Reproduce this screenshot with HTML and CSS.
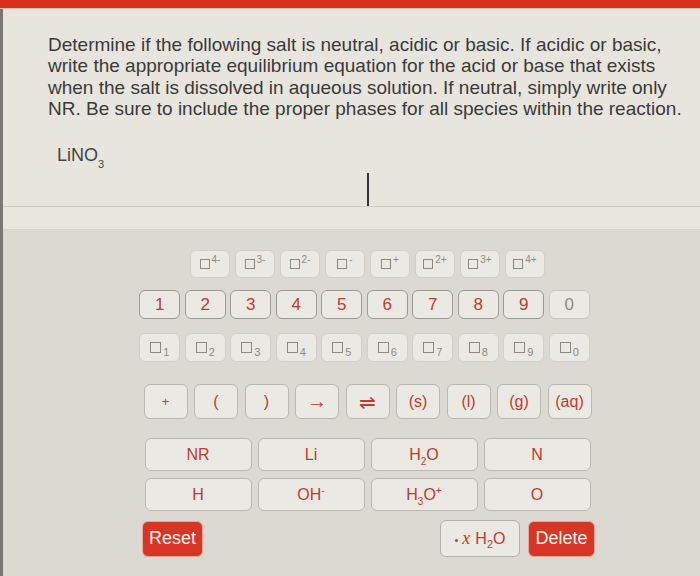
FILE: index.html
```html
<!DOCTYPE html>
<html>
<head>
<meta charset="utf-8">
<link rel="stylesheet" href="styles.css">
</head>
<body>
<div class="topbar"></div>
<div class="page">
  <div class="content">
    <p class="question">Determine if the following salt is neutral, acidic or basic. If acidic or basic,<br>write the appropriate equilibrium equation for the acid or base that exists<br>when the salt is dissolved in aqueous solution. If neutral, simply write only<br>NR. Be sure to include the proper phases for all species within the reaction.</p>
    <div class="formula">LiNO<sub>3</sub></div>
    <div class="answer"><span class="cursor"></span></div>
  </div>
  <div class="band"></div>
  <div class="keypad">
    <div class="row charges">
      <div class="key tpl"><span><span class="box"></span><sup>4-</sup></span></div>
      <div class="key tpl"><span><span class="box"></span><sup>3-</sup></span></div>
      <div class="key tpl"><span><span class="box"></span><sup>2-</sup></span></div>
      <div class="key tpl"><span><span class="box"></span><sup>-</sup></span></div>
      <div class="key tpl"><span><span class="box"></span><sup>+</sup></span></div>
      <div class="key tpl"><span><span class="box"></span><sup>2+</sup></span></div>
      <div class="key tpl"><span><span class="box"></span><sup>3+</sup></span></div>
      <div class="key tpl"><span><span class="box"></span><sup>4+</sup></span></div>
    </div>
    <div class="row digits">
      <div class="key num">1</div>
      <div class="key num">2</div>
      <div class="key num">3</div>
      <div class="key num">4</div>
      <div class="key num">5</div>
      <div class="key num">6</div>
      <div class="key num">7</div>
      <div class="key num">8</div>
      <div class="key num">9</div>
      <div class="key num zero">0</div>
    </div>
    <div class="row subs">
      <div class="key tpl"><span><span class="box"></span><sub>1</sub></span></div>
      <div class="key tpl"><span><span class="box"></span><sub>2</sub></span></div>
      <div class="key tpl"><span><span class="box"></span><sub>3</sub></span></div>
      <div class="key tpl"><span><span class="box"></span><sub>4</sub></span></div>
      <div class="key tpl"><span><span class="box"></span><sub>5</sub></span></div>
      <div class="key tpl"><span><span class="box"></span><sub>6</sub></span></div>
      <div class="key tpl"><span><span class="box"></span><sub>7</sub></span></div>
      <div class="key tpl"><span><span class="box"></span><sub>8</sub></span></div>
      <div class="key tpl"><span><span class="box"></span><sub>9</sub></span></div>
      <div class="key tpl"><span><span class="box"></span><sub>0</sub></span></div>
    </div>
    <div class="row symbols">
      <div class="key sym small">+</div>
      <div class="key sym">(</div>
      <div class="key sym">)</div>
      <div class="key sym arrow">&rarr;</div>
      <div class="key sym arrow">&#8652;</div>
      <div class="key sym">(s)</div>
      <div class="key sym">(l)</div>
      <div class="key sym">(g)</div>
      <div class="key sym">(aq)</div>
    </div>
    <div class="row elements">
      <div class="key el">NR</div>
      <div class="key el">Li</div>
      <div class="key el"><span>H<sub>2</sub>O</span></div>
      <div class="key el">N</div>
    </div>
    <div class="row elements">
      <div class="key el">H</div>
      <div class="key el"><span>OH<sup>-</sup></span></div>
      <div class="key el"><span>H<sub>3</sub>O<sup>+</sup></span></div>
      <div class="key el">O</div>
    </div>
    <div class="row actions">
      <div class="key action">Reset</div>
      <div class="spacer"></div>
      <div class="key water"><span><span class="dot">&bull;</span><i class="x">x</i>H<sub>2</sub>O</span></div>
      <div class="key action delete">Delete</div>
    </div>
  </div>
</div>
</body>
</html>
```

FILE: styles.css
```css
html, body {
  margin: 0;
  padding: 0;
  width: 700px;
  height: 576px;
  overflow: hidden;
  background: #dcd9d3;
  font-family: "Liberation Sans", Arial, sans-serif;
}

.topbar {
  height: 8px;
  background: #d8321f;
  border-bottom: 1px solid #eab9ae;
}

.page {
  border-left: 3px solid #7a7774;
  height: 567px;
  display: flex;
  flex-direction: column;
}

.content {
  background: #e8e5df;
  padding: 25px 0 0 45px;
}

.question {
  margin: 0;
  font-size: 19px;
  line-height: 21.3px;
  color: #3a3a3a;
}

.formula {
  margin: 25px 0 0 9px;
  font-size: 18px;
  color: #444;
  line-height: 22px;
}

.formula sub {
  font-size: 11px;
  vertical-align: -7px;
  line-height: 0;
}

.answer {
  height: 40px;
  border-bottom: 1px solid #cfccc6;
  position: relative;
  margin-left: -45px;
}

.cursor {
  position: absolute;
  left: 364px;
  top: 7px;
  width: 1.5px;
  height: 33px;
  background: #333;
}

.band {
  height: 22px;
  background: #e9e6e0;
  border-bottom: 1px solid #d6d3cd;
}

.keypad {
  flex: 1;
  background: #dcd9d3;
  padding: 20px 0 0 30px;
  display: flex;
  flex-direction: column;
  align-items: center;
}

.row {
  display: flex;
}

.key {
  box-sizing: border-box;
  background: #ebe9e4;
  border: 1px solid #bab7b1;
  border-radius: 6px;
  display: flex;
  align-items: center;
  justify-content: center;
  color: #c23a2b;
}

.charges {
  gap: 5px;
  margin-left: 2px;
}

.charges .key {
  width: 40px;
  height: 28px;
  border-color: #d2cfc9;
}

.tpl {
  color: #8d8a86;
  font-size: 10px;
}

.box {
  display: inline-block;
  width: 8px;
  height: 8px;
  border: 1px solid #8d8a86;
  margin-right: 2px;
  vertical-align: -1px;
}

.tpl sup {
  font-size: 10px;
  line-height: 0;
  vertical-align: 5px;
}

.tpl sub {
  font-size: 11px;
  line-height: 0;
  vertical-align: -4px;
}

.digits {
  gap: 4.5px;
  margin-top: 12px;
  margin-left: -4px;
}

.digits .key {
  width: 41px;
  height: 29px;
  border: 1.5px solid #9e9b96;
  font-size: 17px;
}

.digits .zero {
  border: 1px solid #c9c6c0;
  color: #8d8a86;
}

.subs {
  gap: 4.5px;
  margin-top: 14px;
  margin-left: -4px;
}

.subs .key {
  width: 41px;
  height: 29px;
  border-color: #d2cfc9;
}

.subs .box {
  width: 9px;
  height: 9px;
}

.symbols {
  gap: 6.5px;
  margin-top: 22px;
  margin-left: 2px;
}

.symbols .key {
  width: 44px;
  height: 35px;
  font-size: 16px;
}

.symbols .small {
  font-size: 13px;
}

.symbols .arrow {
  font-size: 20px;
}

.elements {
  gap: 6px;
  margin-top: 7px;
  margin-left: 2px;
}

.symbols + .elements {
  margin-top: 19px;
}

.elements .key {
  width: 107px;
  height: 33px;
  font-size: 16px;
}

.el sub {
  font-size: 10px;
  line-height: 0;
  vertical-align: -5px;
}

.el sup {
  font-size: 10px;
  line-height: 0;
  vertical-align: 6px;
}

.actions {
  width: 453px;
  margin-top: 9px;
  margin-left: 4px;
  align-items: center;
}

.spacer {
  flex: 1;
}

.action {
  background: #d63725;
  border: 1px solid #e9a79c;
  color: #fbeeee;
  font-size: 18px;
  height: 36px;
  width: 61px;
  border-radius: 6px;
}

.delete {
  width: 67px;
  margin-left: 8px;
}

.water {
  width: 80px;
  height: 37px;
  font-size: 16px;
  border-color: #b3b0aa;
}

.water .dot {
  font-size: 11px;
  margin-right: 4px;
}

.water .x {
  font-family: "Liberation Serif", "Times New Roman", serif;
  font-size: 18px;
  margin-right: 5px;
}

.water sub {
  font-size: 11px;
  line-height: 0;
  vertical-align: -4px;
}
```
